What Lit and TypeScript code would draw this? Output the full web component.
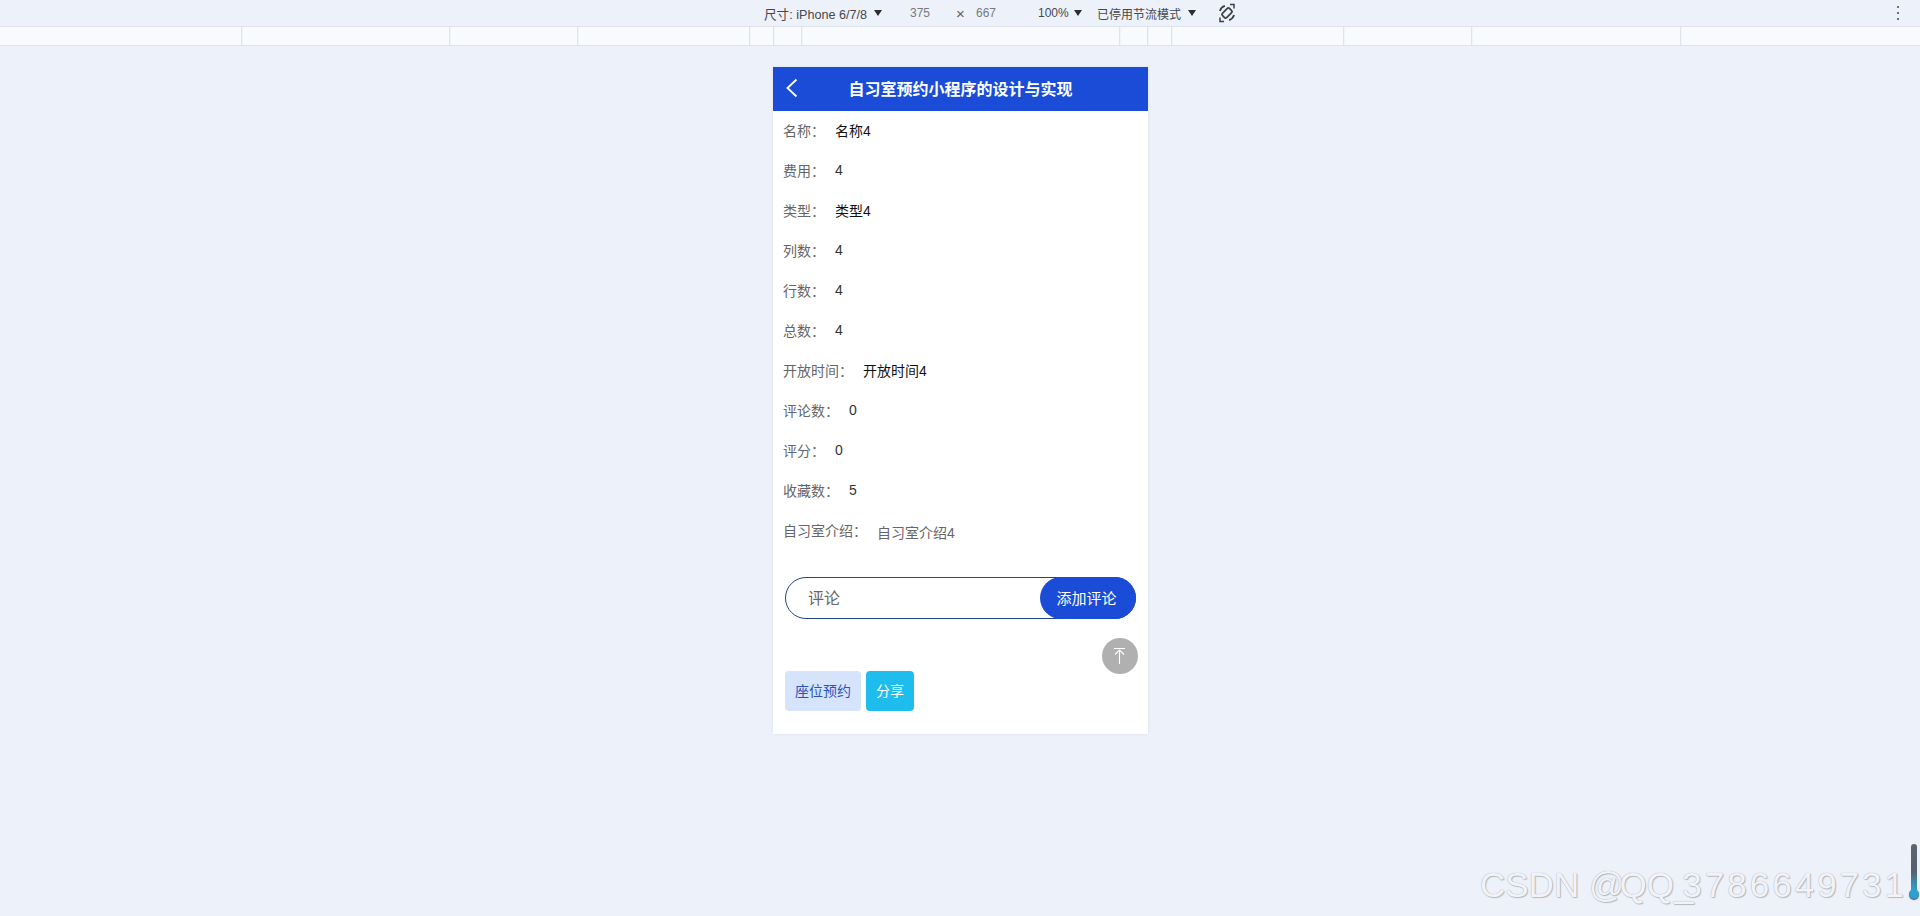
import { LitElement, html, css, svg } from "lit";
import { customElement } from "lit/decorators.js";

const C = "\uFF1A";
const ROWS: [string, string, string][] = [
  ["名称" + C, "名称4", "dark"],
  ["费用" + C, "4", "mid"],
  ["类型" + C, "类型4", "dark"],
  ["列数" + C, "4", "mid"],
  ["行数" + C, "4", "mid"],
  ["总数" + C, "4", "mid"],
  ["开放时间" + C, "开放时间4", "dark"],
  ["评论数" + C, "0", "mid"],
  ["评分" + C, "0", "mid"],
  ["收藏数" + C, "5", "mid"],
];

const TICKS = [241, 449, 577, 749, 773, 801, 1119, 1147, 1171, 1343, 1471, 1680];

@customElement("app-root")
export class AppRoot extends LitElement {
  static styles = css`
    :host {
      display: block;
      position: relative;
      height: 916px;
      overflow: hidden;
      background: #edf1f9;
      font-family: "Liberation Sans", "Noto Sans CJK SC", sans-serif;
    }
    .toolbar {
      height: 26px;
      display: flex;
      align-items: center;
      padding-left: 764px;
      font-size: 12px;
      color: #45484d;
      white-space: nowrap;
    }
    .tri {
      display: inline-block;
      width: 0;
      height: 0;
      border-left: 4px solid transparent;
      border-right: 4px solid transparent;
      border-top: 6px solid #2c2e33;
    }
    .t-size { width: 105px; font-size: 12.6px; }
    .t-w { margin-left: 28px; width: 20px; color: #76797e; }
    .t-x { margin-left: 26px; width: 20px; color: #5c5f64; font-size: 15px; }
    .t-h { width: 20px; color: #76797e; }
    .t-zoom { margin-left: 42px; width: 30px; }
    .t-mode { margin-left: 15px; width: 84px; }
    .tri-a { margin-left: 5px; }
    .tri-b { margin-left: 6px; }
    .tri-c { margin-left: 7px; }
    .rot { margin-left: 21px; width: 20px; height: 20px; display: block; }
    .more { margin-left: auto; margin-right: 20px; width: 4px; height: 14px; display: flex; flex-direction: column; justify-content: space-between; align-items: center; }
    .more i { width: 2.4px; height: 2.4px; border-radius: 50%; background: #45484d; display: block; }
    .ruler {
      height: 18px;
      background: #f8fafe;
      border-top: 1px solid #dde3ec;
      border-bottom: 1px solid #dfe3ea;
      display: grid;
    }
    .ruler svg { display: block; width: 1920px; height: 18px; }
    .main {
      display: flex;
      justify-content: center;
      padding: 21px 0 0 1px;
    }
    .phone {
      position: relative;
      width: 375px;
      height: 667px;
      background: #fff;
      box-shadow: 0 0 3px rgba(0, 0, 0, 0.08);
    }
    .head {
      height: 44px;
      box-sizing: border-box;
      padding-bottom: 2px;
      background: #1a4cd8;
      display: flex;
      align-items: center;
      justify-content: center;
      position: relative;
      color: #fff;
      font-size: 16px;
      font-weight: 700;
    }
    .back {
      position: absolute;
      left: 11px;
      top: 9px;
      width: 16px;
      height: 24px;
    }
    .row {
      height: 40px;
      box-sizing: border-box;
      padding: 0 0 2px 10px;
      display: flex;
      align-items: center;
      font-size: 14px;
    }
    .label { color: #666; margin-right: 10px; }
    .dark { color: #111; }
    .mid { color: #333; }
    .intro .v { color: #666; position: relative; top: 2px; }
    .form {
      margin: 26px 12px 0;
      width: 351px;
      height: 42px;
      box-sizing: border-box;
      border: 1px solid #24457f;
      border-radius: 21px;
      position: relative;
      display: flex;
      align-items: center;
      padding: 0 0 2px 22px;
      font-size: 16px;
      color: #666;
    }
    .add {
      position: absolute;
      right: -1px;
      top: -1px;
      width: 96px;
      height: 42px;
      box-sizing: border-box;
      padding: 0 3px 2px 0;
      border-radius: 21px;
      background: #1a4cd8;
      color: #fff;
      font-size: 15px;
      display: flex;
      align-items: center;
      justify-content: center;
    }
    .totop {
      position: absolute;
      left: 329px;
      top: 571px;
      width: 36px;
      height: 36px;
      border-radius: 50%;
      background: #b0b0b0;
      display: flex;
      align-items: center;
      justify-content: center;
    }
    .totop svg { width: 18px; height: 18px; display: block; }
    .btns {
      display: flex;
      gap: 5px;
      margin: 52px 12px 0;
    }
    .btn {
      height: 40px;
      box-sizing: border-box;
      padding: 0 10px 2px;
      border-radius: 4px;
      font-size: 14px;
      display: flex;
      align-items: center;
    }
    .seat { background: #d6e4fb; color: #2a52be; }
    .share { background: #1fbcee; color: #fff; }
    .mark {
      position: absolute;
      left: 1480px;
      top: 863px;
      font-family: "Liberation Sans", sans-serif;
      font-size: 35px;
      line-height: 44px;
      color: #f1f3f8;
      text-shadow: 0 0 1px #9a9ea5, 1px 1px 1px #b8bbc0;
      white-space: nowrap;
    }
    .mark .at { letter-spacing: -5px; }
    .mark .us { letter-spacing: -11px; }
    .mark .num { letter-spacing: 3px; }
    .scroll {
      position: absolute;
      left: 1911px;
      top: 844px;
      width: 6px;
      height: 54px;
      border-radius: 3px;
      background: linear-gradient(#5d6670 0%, #55626e 50%, #2f9fd0 85%, #37a9d8 100%);
    }
    .scroll::after {
      content: "";
      position: absolute;
      left: -2px;
      bottom: -1px;
      width: 10px;
      height: 10px;
      border-radius: 50%;
      background: #2f9fcf;
      box-shadow: 0 1px 1px #4b5560;
    }
  `;

  render() {
    return html`
      <div class="toolbar">
        <span class="t-size">尺寸: iPhone 6/7/8</span><span class="tri tri-a"></span>
        <span class="t-w">375</span>
        <span class="t-x">×</span>
        <span class="t-h">667</span>
        <span class="t-zoom">100%</span><span class="tri tri-b"></span>
        <span class="t-mode">已停用节流模式</span><span class="tri tri-c"></span>
        <svg class="rot" viewBox="0 0 20 20" fill="none" stroke="#3c3f44" stroke-width="1.700">
          <g transform="rotate(45 10 10)">
            <rect x="7" y="5" width="6" height="10" rx="1.500" />
            <path d="M3.500 13.500a7.500 7.500 0 0 1 0-7M16.500 6.500a7.500 7.500 0 0 1 0 7" />
          </g>
          <path d="M3 14.500v4h4M17 5.500v-4h-4" stroke-width="1.500" />
        </svg>
        <span class="more"><i></i><i></i><i></i></span>
      </div>
      <div class="ruler">
        <svg viewBox="0 0 1920 18">
          ${TICKS.map((x) => svg`<rect x=${x} y="0" width="1.3" height="18" fill="#dfe4ec" />`)}
        </svg>
      </div>
      <div class="main">
        <div class="phone">
          <div class="head">
            <svg class="back" viewBox="0 0 16 24" fill="none" stroke="#fff" stroke-width="1.800">
              <path d="M12.500 3.500 3.500 12 12.500 20.500" />
            </svg>
            自习室预约小程序的设计与实现
          </div>
          ${ROWS.map(
            ([l, v, c]) => html`<div class="row"><span class="label">${l}</span><span class=${c}>${v}</span></div>`
          )}
          <div class="row intro"><span class="label">${"自习室介绍" + C}</span><span class="v">自习室介绍4</span></div>
          <div class="form">评论<div class="add">添加评论</div></div>
          <div class="totop">
            <svg viewBox="0 0 18 18" fill="none" stroke="#fff" stroke-width="1.100">
              <path d="M3 1.500h11M8.500 17V3M4 7.500 8.500 3 13 7.500" />
            </svg>
          </div>
          <div class="btns">
            <div class="btn seat">座位预约</div>
            <div class="btn share">分享</div>
          </div>
        </div>
      </div>
      <div class="mark">CSDN <span class="at">@</span>QQ<span class="us">_</span><span class="num">3786649731</span></div>
      <div class="scroll"></div>
    `;
  }
}
